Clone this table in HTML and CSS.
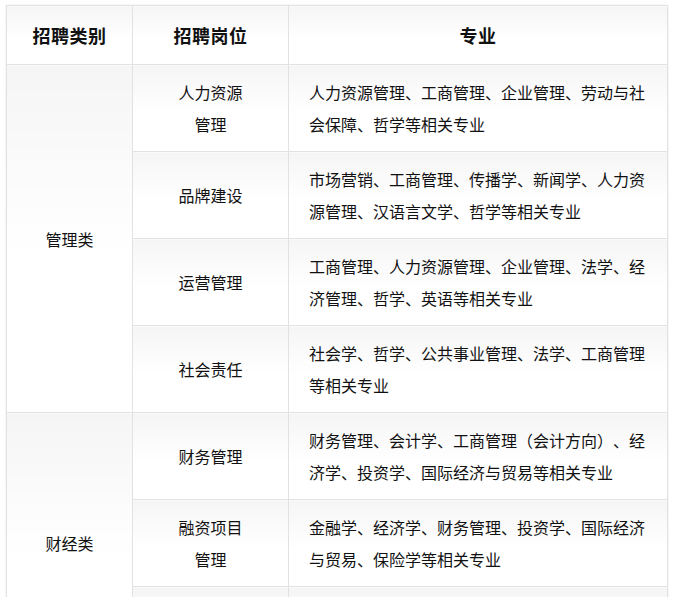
FILE: index.html
```html
<!DOCTYPE html>
<html lang="zh-CN">
<head>
<meta charset="utf-8">
<title>招聘岗位</title>
<link rel="stylesheet" href="styles.css">
</head>
<body>
<div class="page">
  <table class="jobs">
    <colgroup>
      <col class="c-cat">
      <col class="c-pos">
      <col class="c-major">
    </colgroup>
    <thead>
      <tr>
        <th>招聘类别</th>
        <th>招聘岗位</th>
        <th>专业</th>
      </tr>
    </thead>
    <tbody>
      <tr>
        <td class="cat" rowspan="4">管理类</td>
        <td class="pos">人力资源<br>管理</td>
        <td class="major">人力资源管理、工商管理、企业管理、劳动与社会保障、哲学等相关专业</td>
      </tr>
      <tr>
        <td class="pos">品牌建设</td>
        <td class="major">市场营销、工商管理、传播学、新闻学、人力资源管理、汉语言文学、哲学等相关专业</td>
      </tr>
      <tr>
        <td class="pos">运营管理</td>
        <td class="major">工商管理、人力资源管理、企业管理、法学、经济管理、哲学、英语等相关专业</td>
      </tr>
      <tr>
        <td class="pos">社会责任</td>
        <td class="major">社会学、哲学、公共事业管理、法学、工商管理等相关专业</td>
      </tr>
      <tr>
        <td class="cat" rowspan="3">财经类</td>
        <td class="pos">财务管理</td>
        <td class="major">财务管理、会计学、工商管理（会计方向）、经济学、投资学、国际经济与贸易等相关专业</td>
      </tr>
      <tr>
        <td class="pos">融资项目<br>管理</td>
        <td class="major">金融学、经济学、财务管理、投资学、国际经济与贸易、保险学等相关专业</td>
      </tr>
      <tr>
        <td class="pos"></td>
        <td class="major"></td>
      </tr>
    </tbody>
  </table>
</div>
</body>
</html>
```

FILE: styles.css
```css
html, body {
  margin: 0;
  padding: 0;
  background: #ffffff;
}
body {
  height: 597px;
  overflow: hidden;
  font-family: "Noto Sans CJK SC", "Noto Sans", sans-serif;
  color: #111;
}
.page {
  padding: 5px 0 0 6px;
}
.jobs {
  width: 661px;
  table-layout: fixed;
  border-collapse: collapse;
  border: 1px solid #dedede;
  box-shadow: 0 0 2px rgba(0, 0, 0, 0.12);
  border-radius: 3px;
}
.c-cat { width: 126px; }
.c-pos { width: 156px; }
.c-major { width: 379px; }

.jobs th,
.jobs td {
  border: 1px solid #e2e2e2;
  background: linear-gradient(#f5f5f5, #ffffff 55%);
  vertical-align: middle;
}
.jobs th {
  height: 58px;
  padding: 0;
  font-size: 18px;
  font-weight: 700;
  color: #111;
  text-align: center;
  letter-spacing: 0.5px;
}
.jobs td {
  font-size: 16px;
  line-height: 32px;
  height: 64px;
  padding: 11px 20px;
  text-spacing-trim: space-all;
}
.jobs td.cat,
.jobs td.pos {
  text-align: center;
}
.jobs td.major {
  text-align: left;
}
```
